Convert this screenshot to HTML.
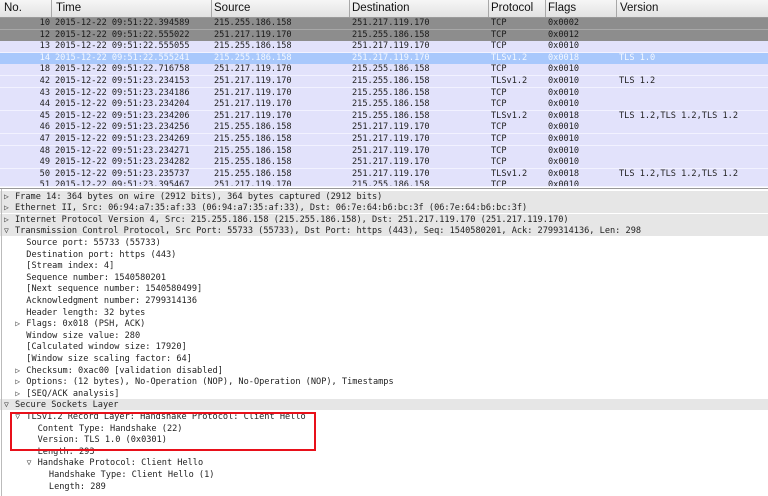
<!DOCTYPE html>
<html><head><style>
body{margin:0;width:768px;height:496px;overflow:hidden;background:#fff;font-family:"DejaVu Sans Mono","Liberation Mono",monospace;font-size:8.6px;color:#222;position:relative}
.hdr{position:absolute;left:0;top:0;width:768px;height:17px;background:linear-gradient(#f6f6f6,#e2e2e2);border-bottom:1px solid #9a9a9a;font-family:"Liberation Sans",sans-serif;font-size:11.5px;color:#111}
.hdr span{position:absolute;top:2px}
.hdr i{position:absolute;top:0;width:1px;height:17px;background:#a8a8a8}
.row{position:absolute;left:0;width:768px;height:11px;border-bottom:1px solid #f2f2ff;background:#e2e2fb;line-height:11px;white-space:pre}
.row span{position:absolute;top:0}
.dk{background:#8d8d8d;border-bottom-color:#a8a8a8;color:#1a1a1a}
.sel{background:#a8c8fc;color:#f4f8ff}
.d{position:absolute;left:0;width:768px;height:11px;line-height:12px;white-space:pre}
.g{background:#e6e6e6;border-bottom:1px solid #fff;height:11px}
.t{position:absolute;font-size:8px;color:#444}
</style></head><body>
<div class="hdr">
<span style="left:4px">No.</span><i style="left:51px"></i>
<span style="left:56px">Time</span><i style="left:211px"></i>
<span style="left:214px">Source</span><i style="left:349px"></i>
<span style="left:352px">Destination</span><i style="left:488px"></i>
<span style="left:491px">Protocol</span><i style="left:545px"></i>
<span style="left:548px">Flags</span><i style="left:616px"></i>
<span style="left:620px">Version</span>
</div>
<div id="pl"></div>
<div style="position:absolute;left:0;top:188px;width:768px;height:1px;background:#999"></div>
<div id="dl"></div>
<div style="position:absolute;left:10px;top:412px;width:302px;height:35px;border:2px solid #e8101a"></div>
<script>
var rows=[
["10","2015-12-22 09:51:22.394589","215.255.186.158","251.217.119.170","TCP","0x0002","","dk"],
["12","2015-12-22 09:51:22.555022","251.217.119.170","215.255.186.158","TCP","0x0012","","dk"],
["13","2015-12-22 09:51:22.555055","215.255.186.158","251.217.119.170","TCP","0x0010","",""],
["14","2015-12-22 09:51:22.555241","215.255.186.158","251.217.119.170","TLSv1.2","0x0018","TLS 1.0","sel"],
["18","2015-12-22 09:51:22.716758","251.217.119.170","215.255.186.158","TCP","0x0010","",""],
["42","2015-12-22 09:51:23.234153","251.217.119.170","215.255.186.158","TLSv1.2","0x0010","TLS 1.2",""],
["43","2015-12-22 09:51:23.234186","251.217.119.170","215.255.186.158","TCP","0x0010","",""],
["44","2015-12-22 09:51:23.234204","251.217.119.170","215.255.186.158","TCP","0x0010","",""],
["45","2015-12-22 09:51:23.234206","251.217.119.170","215.255.186.158","TLSv1.2","0x0018","TLS 1.2,TLS 1.2,TLS 1.2",""],
["46","2015-12-22 09:51:23.234256","215.255.186.158","251.217.119.170","TCP","0x0010","",""],
["47","2015-12-22 09:51:23.234269","215.255.186.158","251.217.119.170","TCP","0x0010","",""],
["48","2015-12-22 09:51:23.234271","215.255.186.158","251.217.119.170","TCP","0x0010","",""],
["49","2015-12-22 09:51:23.234282","215.255.186.158","251.217.119.170","TCP","0x0010","",""],
["50","2015-12-22 09:51:23.235737","215.255.186.158","251.217.119.170","TLSv1.2","0x0018","TLS 1.2,TLS 1.2,TLS 1.2",""],
["51","2015-12-22 09:51:23.395467","251.217.119.170","215.255.186.158","TCP","0x0010","",""]];
var h="";
rows.forEach(function(r,i){var y=18+i*11.6;h+='<div class="row '+r[7]+'" style="top:'+y+'px;'+(i==14?'height:6px;overflow:hidden':'')+'"><span style="right:718px">'+r[0]+'</span><span style="left:55px">'+r[1]+'</span><span style="left:214px">'+r[2]+'</span><span style="left:352px">'+r[3]+'</span><span style="left:491px">'+r[4]+'</span><span style="left:548px">'+r[5]+'</span><span style="left:619px">'+r[6]+'</span></div>';});
document.getElementById("pl").innerHTML=h;
var R="▷",D="▽";
var d=[
[0,R,"Frame 14: 364 bytes on wire (2912 bits), 364 bytes captured (2912 bits)",1],
[0,R,"Ethernet II, Src: 06:94:a7:35:af:33 (06:94:a7:35:af:33), Dst: 06:7e:64:b6:bc:3f (06:7e:64:b6:bc:3f)",1],
[0,R,"Internet Protocol Version 4, Src: 215.255.186.158 (215.255.186.158), Dst: 251.217.119.170 (251.217.119.170)",1],
[0,D,"Transmission Control Protocol, Src Port: 55733 (55733), Dst Port: https (443), Seq: 1540580201, Ack: 2799314136, Len: 298",1],
[1,"","Source port: 55733 (55733)"],
[1,"","Destination port: https (443)"],
[1,"","[Stream index: 4]"],
[1,"","Sequence number: 1540580201"],
[1,"","[Next sequence number: 1540580499]"],
[1,"","Acknowledgment number: 2799314136"],
[1,"","Header length: 32 bytes"],
[1,R,"Flags: 0x018 (PSH, ACK)"],
[1,"","Window size value: 280"],
[1,"","[Calculated window size: 17920]"],
[1,"","[Window size scaling factor: 64]"],
[1,R,"Checksum: 0xac00 [validation disabled]"],
[1,R,"Options: (12 bytes), No-Operation (NOP), No-Operation (NOP), Timestamps"],
[1,R,"[SEQ/ACK analysis]"],
[0,D,"Secure Sockets Layer",1],
[1,D,"TLSv1.2 Record Layer: Handshake Protocol: Client Hello"],
[2,"","Content Type: Handshake (22)"],
[2,"","Version: TLS 1.0 (0x0301)"],
[2,"","Length: 293"],
[2,D,"Handshake Protocol: Client Hello"],
[3,"","Handshake Type: Client Hello (1)"],
[3,"","Length: 289"]];
h="";
d.forEach(function(r,i){var y=190.5+i*11.6;var x=15+r[0]*11.3;
h+='<div class="d'+(r[3]?' g':'')+'" style="top:'+y+'px">'+(r[1]?'<span class="t" style="left:'+(x-11)+'px">'+r[1]+'</span>':'')+'<span style="position:absolute;left:'+x+'px">'+r[2]+'</span></div>';});
document.getElementById("dl").innerHTML=h;
</script>
<div style="position:absolute;left:1px;top:189px;width:1px;height:307px;background:#bbb"></div>
</body></html>
